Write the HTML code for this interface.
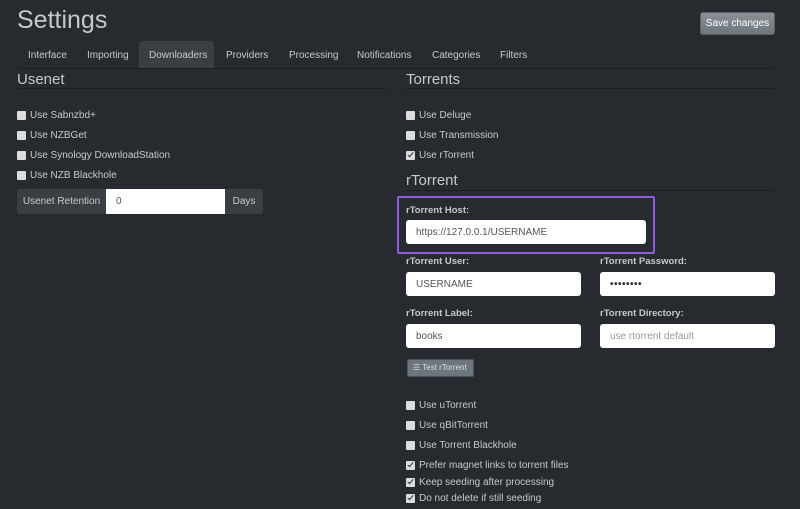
<!DOCTYPE html>
<html><head><meta charset="utf-8"><style>
*{box-sizing:border-box;margin:0;padding:0}
body{width:800px;height:509px;background:#272b30;color:#c8c8c8;font-family:"Liberation Sans",Arial,sans-serif;position:relative;overflow:hidden}
.a{position:absolute;white-space:nowrap}
.t{font-size:10px;color:#c8c8c8}
.h{font-size:15px;color:#c8c8c8}
.line{position:absolute;height:1px;background:#1c1e22}
.cb{position:absolute;width:9px;height:9px;background:#dcdcdc;border-radius:1px}
.cb.c::after{content:"";position:absolute;left:3px;top:0px;width:2px;height:5px;border:solid #333;border-width:0 1.5px 1.5px 0;transform:rotate(40deg)}
.inp{position:absolute;background:#fff;border-radius:3px;font-size:10px;color:#555;padding-left:10px;display:flex;align-items:center}
.lbl{font-size:9.5px;font-weight:bold;color:#c8c8c8}
</style></head><body>
<div class="a" style="left:17px;top:6px;font-size:25px;color:#c8c8c8">Settings</div>
<div class="a" style="left:700px;top:12px;width:75px;height:23px;background:linear-gradient(#8a9196,#6e767d);border:1px solid #5a6166;border-radius:3px;color:#fff;font-size:10px;text-align:center;line-height:21px">Save changes</div>
<div class="a" style="left:139px;top:41px;width:75px;height:28px;background:#3a3f44;border-radius:3px 3px 0 0"></div>
<div class="line" style="left:17px;top:68px;width:758px;background:#1c1e22"></div>
<div class="a t" style="left:28px;top:50px">Interface</div>
<div class="a t" style="left:87px;top:50px">Importing</div>
<div class="a t" style="left:149px;top:50px">Downloaders</div>
<div class="a t" style="left:226px;top:50px">Providers</div>
<div class="a t" style="left:289px;top:50px">Processing</div>
<div class="a t" style="left:357px;top:50px">Notifications</div>
<div class="a t" style="left:432px;top:50px">Categories</div>
<div class="a t" style="left:500px;top:50px">Filters</div>

<div class="a h" style="left:17px;top:71px">Usenet</div>
<div class="line" style="left:17px;top:88px;width:369px"></div>
<div class="a h" style="left:406px;top:71px">Torrents</div>
<div class="line" style="left:406px;top:88px;width:369px"></div>

<div class="cb" style="left:17px;top:111px"></div><div class="a t" style="left:30px;top:110px">Use Sabnzbd+</div>
<div class="cb" style="left:17px;top:131px"></div><div class="a t" style="left:30px;top:130px">Use NZBGet</div>
<div class="cb" style="left:17px;top:151px"></div><div class="a t" style="left:30px;top:150px">Use Synology DownloadStation</div>
<div class="cb" style="left:17px;top:171px"></div><div class="a t" style="left:30px;top:170px">Use NZB Blackhole</div>
<div class="a" style="left:17px;top:189px;width:89px;height:25px;background:#3a3f44;border-radius:3px 0 0 3px;font-size:10px;text-align:center;line-height:25px;color:#c8c8c8">Usenet Retention</div>
<div class="inp" style="left:106px;top:189px;width:119px;height:25px;border-radius:0">0</div>
<div class="a" style="left:225px;top:189px;width:38px;height:25px;background:#3a3f44;border-radius:0 3px 3px 0;font-size:10px;text-align:center;line-height:25px;color:#c8c8c8">Days</div>

<div class="cb" style="left:406px;top:111px"></div><div class="a t" style="left:419px;top:110px">Use Deluge</div>
<div class="cb" style="left:406px;top:131px"></div><div class="a t" style="left:419px;top:130px">Use Transmission</div>
<div class="cb c" style="left:406px;top:151px"></div><div class="a t" style="left:419px;top:150px">Use rTorrent</div>
<div class="a h" style="left:406px;top:172px">rTorrent</div>
<div class="line" style="left:406px;top:190px;width:369px"></div>
<div class="a" style="left:397px;top:196px;width:258px;height:58px;border:2px solid #8a5fd8;border-radius:2px"></div>
<div class="a lbl" style="left:406px;top:205px">rTorrent Host:</div>
<div class="inp" style="left:406px;top:220px;width:240px;height:24px">https://127.0.0.1/USERNAME</div>
<div class="a lbl" style="left:406px;top:256px">rTorrent User:</div>
<div class="a lbl" style="left:600px;top:256px">rTorrent Password:</div>
<div class="inp" style="left:406px;top:272px;width:175px;height:24px">USERNAME</div>
<div class="inp" style="left:600px;top:272px;width:175px;height:24px;color:#333;font-weight:bold;letter-spacing:0.5px">••••••••</div>
<div class="a lbl" style="left:406px;top:308px">rTorrent Label:</div>
<div class="a lbl" style="left:600px;top:308px">rTorrent Directory:</div>
<div class="inp" style="left:406px;top:324px;width:175px;height:24px">books</div>
<div class="inp" style="left:600px;top:324px;width:175px;height:24px;color:#999">use rtorrent default</div>
<div class="a" style="left:407px;top:359px;width:67px;height:18px;background:#6e767d;border:1px solid #50575c;border-radius:2px;font-size:8px;color:#ddd;line-height:16px;padding-left:5px">☰ Test rTorrent</div>

<div class="cb" style="left:406px;top:401px"></div><div class="a t" style="left:419px;top:400px">Use uTorrent</div>
<div class="cb" style="left:406px;top:421px"></div><div class="a t" style="left:419px;top:420px">Use qBitTorrent</div>
<div class="cb" style="left:406px;top:441px"></div><div class="a t" style="left:419px;top:440px">Use Torrent Blackhole</div>
<div class="cb c" style="left:406px;top:461px"></div><div class="a t" style="left:419px;top:460px">Prefer magnet links to torrent files</div>
<div class="cb c" style="left:406px;top:478px"></div><div class="a t" style="left:419px;top:477px">Keep seeding after processing</div>
<div class="cb c" style="left:406px;top:494px"></div><div class="a t" style="left:419px;top:493px">Do not delete if still seeding</div>
</body></html>
